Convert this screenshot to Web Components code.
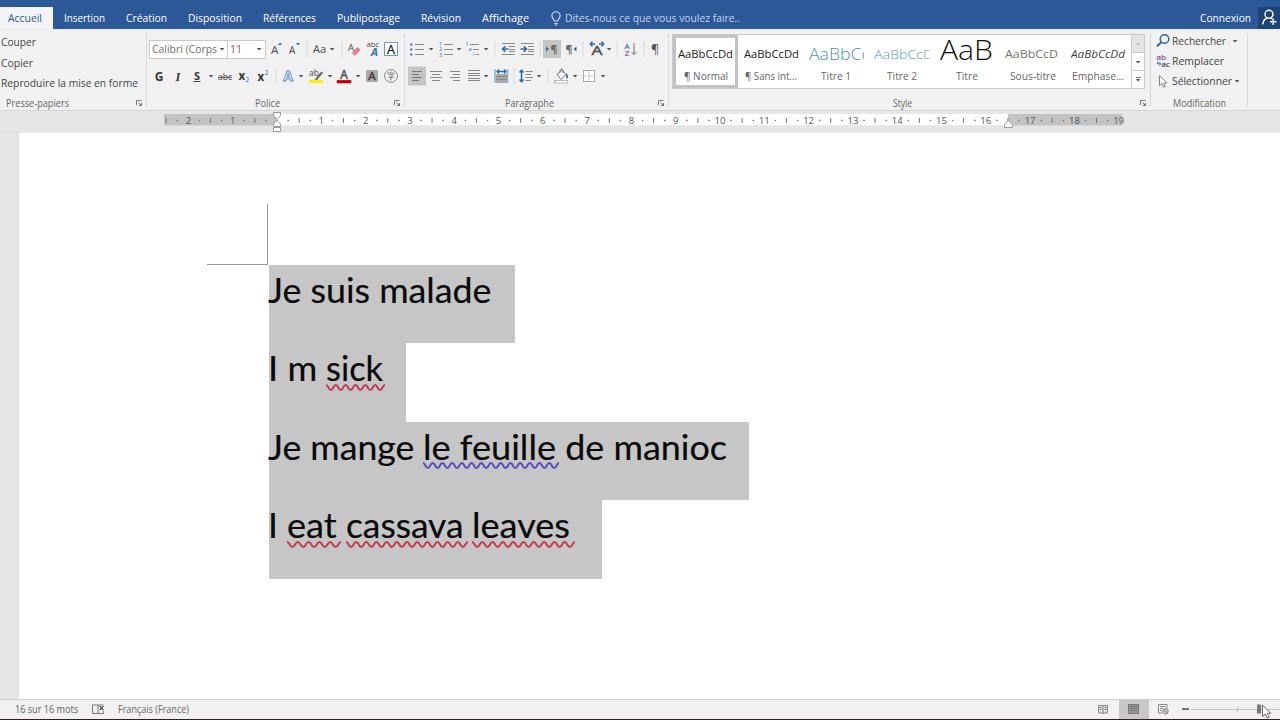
<!DOCTYPE html>
<html lang="fr">
<head>
<meta charset="utf-8">
<title>Word</title>
<style>
    html, body { margin: 0; height: 100%; }
    body {
        width: 1280px;
        height: 720px;
        overflow: hidden;
        display: flex;
        flex-direction: column;
        background: #fff;
        color: #444;
        font: 11px/14px "Open Sans", "Noto Sans", sans-serif;
    }
</style>
</head>
<body>
<word-tabs></word-tabs>
<word-ribbon></word-ribbon>
<word-ruler></word-ruler>
<word-page></word-page>
<word-status></word-status>

<script>
// Icons are drawn on a 20x20 grid, centred on 10,10
const lines = (x1, x2, ys, color = '#777') =>
    ys.map(y => `<path d="M${x1} ${y}H${x2}" stroke="${color}"/>`).join('');

const ICONS = {
    caret: '<path d="M7.8 9h4.6l-2.3 2.6z" fill="#555"/>',
    sep: '<path d="M10 2v16" stroke="#d8d8d8"/>',
    grow: '<text x="5" y="15" font-size="11.5">A</text><path d="M12 6l2-2.6L16 6z" fill="#2f6da8"/>',
    shrink: '<text x="5" y="15" font-size="10">A</text><path d="M12 4l2 2.4L16 4z" fill="#2f6da8"/>',
    aa: '<text x="3" y="14" font-size="11">Aa</text>',
    eraser: '<text x="4" y="12" font-size="9.5">A</text><path d="M8 13.5l5.5-5.5 3 3-5.5 5.5z" fill="#e4788f"/><path d="M7.8 13.7l3 3" stroke="#f0a8b6" stroke-width="1.6"/>',
    abcA: '<text x="3.5" y="7.5" font-size="7.5">abc</text><text x="8" y="17" font-size="11" font-weight="700" font-style="italic" fill="#2f6da8">A</text>',
    boxA: '<rect x="3.5" y="3.5" width="13" height="13" fill="#fff" stroke="#6d9cc4"/><text x="10" y="14.5" text-anchor="middle" font-size="12.5" fill="#222" stroke="#222" stroke-width=".3">A</text>',
    bold: '<text x="10" y="14.5" text-anchor="middle" font-size="12" font-weight="700" fill="#333">G</text>',
    italic: '<text x="10" y="14.5" text-anchor="middle" font-size="12.5" font-weight="700" font-style="italic" style="font-family:Liberation Serif,serif" fill="#333">I</text>',
    under: '<text x="10" y="13.5" text-anchor="middle" font-size="11" font-weight="700" fill="#333">S</text><path d="M6.5 15.5h7" stroke="#444"/>',
    strike: '<text x="10" y="14" text-anchor="middle" font-size="8.5" textLength="14" lengthAdjust="spacingAndGlyphs">abc</text><path d="M3 11.3h14" stroke="#555"/>',
    sub: '<text x="4.5" y="14" font-size="11.5" font-weight="700" fill="#333">x</text><text x="11.5" y="16" font-size="6.5" fill="#2f6da8">2</text>',
    sup: '<text x="4.5" y="14.5" font-size="11.5" font-weight="700" fill="#333">x</text><text x="11.7" y="9" font-size="6.5" fill="#2f6da8">2</text>',
    outlineA: '<text x="10" y="15" text-anchor="middle" font-size="14" font-weight="700" fill="#fff" stroke="#5b8fc4" stroke-width=".9">A</text>',
    marker: '<text x="3" y="9.5" font-size="8.5">ab</text><path d="M8.5 14l6.8-8.5 1.7 1.3-6.5 8z" fill="#666"/><path d="M3 15.5h14" stroke="#fff200" stroke-width="3.2"/>',
    fontColor: '<text x="10" y="12.5" text-anchor="middle" font-size="12" stroke="#444" stroke-width=".4">A</text><path d="M2.8 15.7h14.5" stroke="#c00000" stroke-width="3.2"/>',
    shadeA: '<rect x="4" y="4" width="12" height="12" fill="#a9a9a9"/><text x="10" y="14.3" text-anchor="middle" font-size="11.5" fill="#333" stroke="#333" stroke-width=".3">A</text>',
    circled: '<circle cx="10" cy="10" r="6.4" fill="#f7f7f7" stroke="#777" stroke-width=".9"/><path d="M10 5.3v1.2M6.8 8.3V7h6.4v1.3M7.8 8.8h4.3L10 10.5v3.6H8.7M6.8 11.3h6.4" fill="none" stroke="#777" stroke-width=".9"/>',
    bullets: lines(8, 17, [5.5, 10.5, 15.5], '#8a8a8a') + '<path d="M3.3 5.5h2M3.3 10.5h2M3.3 15.5h2" stroke="#2f6da8" stroke-width="2"/>',
    numbers: lines(8, 17, [5.5, 10.5, 15.5], '#8a8a8a') + '<g font-size="5.5" fill="#2f6da8"><text x="3" y="7">1</text><text x="3" y="12.3">2</text><text x="3" y="17.6">3</text></g>',
    multi: '<path d="M8 5.5h9M11 10.5h6M14 15.5h3" stroke="#8a8a8a"/><g font-size="5.5" fill="#2f6da8"><text x="3.5" y="6.5">1</text><text x="6.5" y="12">a</text><text x="11" y="17">i</text></g>',
    outdent: '<path d="M4 4.5h13M11 7.5h6M11 10.5h6M11 12.5h6M4 15.5h13" stroke="#8a8a8a"/><path d="M10.5 10H5M7.3 7.4L4.7 10l2.6 2.6" fill="none" stroke="#2f6da8" stroke-width="1.7"/>',
    indent: '<path d="M4 4.5h13M11 7.5h6M11 10.5h6M11 12.5h6M4 15.5h13" stroke="#8a8a8a"/><path d="M3.5 10H9M6.8 7.4L9.4 10l-2.6 2.6" fill="none" stroke="#2f6da8" stroke-width="1.7"/>',
    ltr: '<rect x="1" y="1" width="18" height="18" fill="#c5c5c5"/><path d="M4 7.5v5l3-2.5z" fill="#2f6da8"/><text x="8.5" y="14" font-size="10.5" font-weight="700" fill="#666">¶</text>',
    rtl: '<text x="4.5" y="14" font-size="10.5" font-weight="700" fill="#666">¶</text><path d="M15.5 7.5v5l-3-2.5z" fill="#2f6da8"/>',
    scaleA: '<path d="M3 5h5M12 5h5M5.5 2.5L3.2 5l2.3 2.5M14.5 2.5l2.3 2.5-2.3 2.5" fill="none" stroke="#2f6da8" stroke-width="1.4"/><text x="10" y="16" text-anchor="middle" font-size="13" textLength="11" lengthAdjust="spacingAndGlyphs" stroke="#4a4a4a" stroke-width=".4">A</text>',
    sort: '<text x="3.5" y="9.5" font-size="8" fill="#2f6da8" stroke="#2f6da8" stroke-width=".2">A</text><text x="3.7" y="16.8" font-size="8" fill="#80499c" stroke="#80499c" stroke-width=".2">Z</text><path d="M13 4v11.5M10.5 13l2.5 2.7 2.5-2.7" fill="none" stroke="#777"/>',
    pilcrow: '<text x="10" y="14.5" text-anchor="middle" font-size="12.5" fill="#555">¶</text>',
    left: '<rect x="1" y="0.5" width="18" height="19" fill="#c5c5c5"/><path d="M5 5.5h10M5 8.5h7M5 11.5h10M5 14.5h7" stroke="#777"/>',
    center: '<path d="M4 5.5h12M6 8.5h8M4 11.5h12M6 14.5h8" stroke="#888"/>',
    right: '<path d="M5 5.5h10M8 8.5h7M5 11.5h10M8 14.5h7" stroke="#888"/>',
    justify: lines(4, 16, [4.5, 7.5, 9.5, 12.5, 14.5], '#888'),
    spread: '<path d="M4 3v14M16.5 3v14" stroke="#8db4d9" stroke-width="1.6"/><rect x="5" y="8" width="11" height="9" fill="#aaa"/><path d="M5 10.5h11M5 13.5h11" stroke="#888"/><path d="M5.5 5.5h10M8 3.5L6 5.5l2 2M13 3.5l2 2-2 2" fill="none" stroke="#2f6da8" stroke-width="1.3"/>',
    spacing: '<path d="M5.5 4v12M3.5 6.5l2-2.3 2 2.3M3.5 13.5l2 2.3 2-2.3" fill="none" stroke="#2f6da8" stroke-width="1.5"/><path d="M9.5 5.5H17M9.5 8.5H15M9.5 11.5H17M9.5 14.5H15" stroke="#888"/>',
    bucket: '<path d="M6 8.5l5-4.5 4 4.5-5 5z" fill="#fafafa" stroke="#777"/><path d="M9 7V4.5a1.5 1.5 0 0 1 3 0V7" fill="none" stroke="#777"/><path d="M15 7q3 2.5 1.5 6-2-1-1.5-6z" fill="#2f6da8"/><rect x="3.5" y="14.5" width="13" height="2.5" fill="#fff" stroke="#aaa" stroke-width=".8"/>',
    borders: '<rect x="4.5" y="4.5" width="11" height="11" fill="#fff" stroke="#aaa"/><path d="M10 5v10M5 10h10" stroke="#ccc"/>',
    find: '<circle cx="11.5" cy="8" r="4.3" fill="none" stroke="#35659b" stroke-width="1.5"/><path d="M8.3 11.2L4 15.3" stroke="#35659b" stroke-width="2"/>',
    replace: '<text x="3.5" y="9" font-size="8" fill="#80499c" stroke="#80499c" stroke-width=".2">ab</text><text x="8.5" y="15.8" font-size="8" stroke="#4a4a4a" stroke-width=".2">ac</text><path d="M4.5 10.5v2.3h3.2M6.2 11l1.8 1.8-1.8 1.8" fill="none" stroke="#2f6da8"/>',
    pointer: '<path d="M6.5 4.5v10.3l2.6-2.3 1.6 3.8 1.6-.7-1.6-3.6h3.2z" fill="#fff" stroke="#777" stroke-width=".9"/>',
    launcher: '<path d="M7.5 12V7.5h5" fill="none" stroke="#777"/><path d="M9.5 9.5l2.5 2.5" stroke="#777"/><path d="M13 9.5V13H9.5z" fill="#777"/>',
    bulb: '<path d="M8.3 13c0-2-2.4-2.5-2.4-5.2a4.1 4.1 0 0 1 8.2 0c0 2.7-2.4 3.2-2.4 5.2zM8.3 15.5h3.4M8.8 17h2.4" fill="none" stroke="#d5e2f2" stroke-width="1.1"/>',
    user: '<circle cx="9" cy="6.3" r="4" fill="none" stroke="#fff" stroke-width="1.4"/><path d="M2.8 16.5c.3-3.7 2-5.8 4.6-6.5M10.5 10.1c.8.2 1.4.6 1.9 1M13.2 10.5v6.5M10 13.8h6.5" fill="none" stroke="#fff" stroke-width="1.4"/>',
    proof: '<path d="M10 6v9M10 6H4.5v8.5H10M10 6h5.5M15.5 12v2.5H10" fill="none" stroke="#777"/><path d="M11.8 7.2l3.6 4M15.4 7.2l-3.6 4" stroke="#444" stroke-width="1.2"/>',
    read: '<path d="M5.5 5.5h4l.5.7.5-.7h4V13h-4l-.5.8-.5-.8h-4z" fill="#ddd" stroke="#888"/><path d="M10 6v8M6.5 7.5h2M6.5 9.5h2M11.5 7.5h2M11.5 9.5h2" stroke="#888"/>',
    print: '<rect x="4.5" y="4.5" width="10" height="9" fill="#999" stroke="#777"/><path d="M6 6.5h7M6 8.5h7M6 10.5h7" stroke="#777"/>',
    web: '<path d="M14 8V4.5H5.5V13H9" fill="none" stroke="#888"/><path d="M7 6.5h5.5M7 8.5h3M7 10.5h2" stroke="#888"/><circle cx="12.5" cy="11.3" r="2.7" fill="#ddd" stroke="#777"/><path d="M11 10l3 2.6" stroke="#666"/>'
};

const attach = (el, html) => {
    el.attachShadow({ mode: 'open' }).innerHTML = html;
};

const icons = list => list.split(' ').map(item => {
    const [name, w] = item.split(':');
    return `<tool-icon name="${name}" w="${w}"></tool-icon>`;
}).join('');

class ToolIcon extends HTMLElement {
    connectedCallback() {
        attach(this, `
            <style>
                :host { display: flex; justify-content: center; align-items: center; flex: none; width: ${this.getAttribute('w') || 20}px; height: 20px; }
                svg { flex: none; width: 20px; height: 20px; overflow: visible; }
                text { font-family: "Open Sans", sans-serif; }
            </style>
            <svg viewBox="0 0 20 20" fill="#4a4a4a">${ICONS[this.getAttribute('name')]}</svg>
        `);
    }
}

// Text squeezed or stretched to an exact width
class FitText extends HTMLElement {
    connectedCallback() {
        const w = Number(this.getAttribute('w'));
        attach(this, `
            <style>
                :host { display: flex; flex: none; width: ${w}px; }
                span { flex: none; white-space: pre; transform-origin: 0 50%; }
            </style>
            <span><slot></slot></span>
        `);
        const span = this.shadowRoot.querySelector('span');
        span.style.transform = `scaleX(${w / span.getBoundingClientRect().width})`;
    }
}

class WordTabs extends HTMLElement {
    connectedCallback() {
        const tabs = [['Insertion', 41], ['Création', 41], ['Disposition', 54], ['Références', 53], ['Publipostage', 63], ['Révision', 40], ['Affichage', 47]];
        attach(this, `
            <style>
                :host { display: flex; align-items: flex-end; flex: none; height: 29px; background: #2d5897; color: #fff; }
                nav, .tell, .right { display: flex; height: 22px; align-items: center; }
                .tab { display: flex; align-items: center; height: 22px; padding: 0 10.5px; }
                .tab.active { background: #f3f4f5; color: #2b579a; padding: 0 11px 0 8px; }
                .tell { margin-left: 7px; color: #c3d5ec; }
                .right { margin-left: auto; gap: 7px; }
                .user { width: 22px; height: 22px; background: #1e4377; display: flex; align-items: center; }
            </style>
            <nav>
                <div class="tab active"><fit-text w="34">Accueil</fit-text></div>
                ${tabs.map(([t, w]) => `<div class="tab"><fit-text w="${w}">${t}</fit-text></div>`).join('')}
            </nav>
            <div class="tell">
                <tool-icon name="bulb" w="19"></tool-icon>
                <fit-text w="175">Dites-nous ce que vous voulez faire..</fit-text>
            </div>
            <div class="right">
                <fit-text w="51">Connexion</fit-text>
                <div class="user"><tool-icon name="user" w="24"></tool-icon></div>
            </div>
        `);
    }
}

class RibbonGroup extends HTMLElement {
    connectedCallback() {
        const a = n => this.getAttribute(n);
        attach(this, `
            <style>
                :host { display: flex; flex-direction: column; flex: none; box-sizing: border-box; width: ${a('w')}px; height: 80px; position: relative; }
                :host::after { content: ""; position: absolute; right: 0; top: 3px; bottom: 3px; width: 1px; background: #d9d9d9; }
                .body { flex: none; height: 66px; box-sizing: border-box; padding-top: 1px; }
                footer { display: flex; align-items: center; height: 13px; color: #666; }
                .label { padding-left: ${a('offset')}px; }
                tool-icon { margin-left: auto; margin-right: -1px; }
            </style>
            <div class="body"><slot></slot></div>
            <footer>
                <div class="label"><fit-text w="${a('lw')}">${a('label')}</fit-text></div>
                ${this.hasAttribute('launcher') ? '<tool-icon name="launcher" w="18"></tool-icon>' : ''}
            </footer>
        `);
    }
}

class FontPicker extends HTMLElement {
    connectedCallback() {
        attach(this, `
            <style>
                :host { display: flex; flex: none; width: 117px; height: 19px; }
                div { display: flex; align-items: center; box-sizing: border-box; background: #fff; border: 1px solid #c9c9c9; height: 19px; }
                .name { width: 79px; padding-left: 2px; color: #75706a; }
                .size { width: 38px; padding-left: 2px; border-left: 0; color: #8a5560; justify-content: space-between; }
            </style>
            <div class="name"><fit-text w="65">Calibri (Corps</fit-text><tool-icon name="caret" w="10"></tool-icon></div>
            <div class="size"><fit-text w="12">11</fit-text><tool-icon name="caret" w="12"></tool-icon></div>
        `);
    }
}

class StyleGallery extends HTMLElement {
    connectedCallback() {
        // sample, sample width, sample css, label, label width
        const styles = [
            ['AaBbCcDd', 55, 'color:#222', '¶ Normal', 44],
            ['AaBbCcDd', 55, 'color:#222', '¶ Sans int...', 52],
            ['AaBbCc', 61, 'color:#4f94b5;font-size:16px;font-weight:300', 'Titre 1', 30],
            ['AaBbCcD', 59, 'color:#5598b8;font-size:13.5px;font-weight:300', 'Titre 2', 30],
            ['AaB', 53, 'color:#111;font-size:27px;font-weight:300', 'Titre', 22],
            ['AaBbCcD', 53, 'color:#77766a', 'Sous-titre', 46],
            ['AaBbCcDd', 54, 'color:#444;font-style:italic', 'Emphase...', 52]
        ];
        attach(this, `
            <style>
                :host { display: flex; box-sizing: border-box; width: 473px; height: 55px; margin: 3px 0 0 3px; background: #fff; border: 1px solid #cacaca; }
                .cell { width: 65.4px; height: 53px; box-sizing: border-box; flex: none; display: flex; flex-direction: column; align-items: center; padding-top: 4px; }
                .cell.on { outline: 3px solid #c3c3c3; outline-offset: -3px; }
                .sample { width: 55px; height: 30px; overflow: hidden; display: flex; align-items: center; font-size: 11.5px; }
                .cell.big .sample { align-items: flex-start; line-height: 22px; }
                .label { color: #666; }
                .scroll { margin-left: auto; width: 13px; display: flex; flex-direction: column; border-left: 1px solid #cacaca; }
                .scroll div { flex: 1; display: flex; align-items: center; justify-content: center; overflow: hidden; }
                .scroll div + div { border-top: 1px solid #cacaca; }
                .scroll .off { background: #e4e4e4; }
                .off tool-icon { transform: scaleY(-1); opacity: .3; }
                .more { position: relative; }
                .more::before { content: ""; position: absolute; top: 6px; left: 4px; width: 5px; height: 1px; background: #777; }
            </style>
            ${styles.map(([s, sw, css, l, lw], i) => `
                <div class="cell ${i === 0 ? 'on' : ''} ${i === 4 ? 'big' : ''}">
                    <div class="sample" style="${css}"><fit-text w="${sw}">${s}</fit-text></div>
                    <div class="label"><fit-text w="${lw}">${l}</fit-text></div>
                </div>`).join('')}
            <div class="scroll">
                <div class="off"><tool-icon name="caret" w="12"></tool-icon></div>
                <div><tool-icon name="caret" w="12"></tool-icon></div>
                <div class="more"><tool-icon name="caret" w="12"></tool-icon></div>
            </div>
        `);
    }
}

class WordRibbon extends HTMLElement {
    connectedCallback() {
        attach(this, `
            <style>
                :host { display: flex; flex: none; box-sizing: border-box; height: 82px; background: #f1f1f1; border-top: 1px solid #e3ebf5; border-bottom: 1px solid #d5d5d5; }
                .row { display: flex; align-items: center; height: 20px; margin-top: 8px; padding-left: 2px; }
                .row + .row { margin-top: 7px; }
                .clip { display: flex; flex-direction: column; gap: 6.5px; padding: 4px 0 0 0.5px; }
                .edit { display: flex; flex-direction: column; padding-left: 2px; }
                .edit div { display: flex; align-items: center; height: 19.9px; }
            </style>
            <ribbon-group w="147" label="Presse-papiers" lw="63" offset="6" launcher>
                <div class="clip">
                    <fit-text w="35">Couper</fit-text>
                    <fit-text w="32">Copier</fit-text>
                    <fit-text w="137">Reproduire la mise en forme</fit-text>
                </div>
            </ribbon-group>
            <ribbon-group w="258" label="Police" lw="25" offset="108" launcher>
                <div class="row"><font-picker></font-picker>${icons('grow:20 shrink:16 sep:10 aa:15 caret:10 sep:9 eraser:16 abcA:21 boxA:16')}</div>
                <div class="row">${icons('bold:19 italic:19 under:19 caret:9 strike:20 sub:18 sup:19 sep:7 outlineA:18 caret:8 marker:21 caret:7 fontColor:22 caret:6 shadeA:21 circled:18')}</div>
            </ribbon-group>
            <ribbon-group w="264" label="Paragraphe" lw="49" offset="100" launcher>
                <div class="row">${icons('bullets:20 caret:8 numbers:21 caret:6 multi:20 caret:8 sep:9 outdent:17 indent:22 sep:3 ltr:22 rtl:16 sep:8 scaleA:19 caret:5 sep:12 sort:16 sep:9 pilcrow:14')}</div>
                <div class="row">${icons('left:20 center:18 right:20 justify:18 caret:6 spread:24 sep:2 spacing:22 caret:4 sep:14 bucket:12 caret:15 borders:14 caret:14')}</div>
            </ribbon-group>
            <ribbon-group w="482" label="Style" lw="19" offset="224" launcher>
                <style-gallery></style-gallery>
            </ribbon-group>
            <ribbon-group w="97" label="Modification" lw="53" offset="22">
                <div class="edit">
                    <div><tool-icon name="find" w="19"></tool-icon><fit-text w="54">Rechercher</fit-text><tool-icon name="caret" w="18"></tool-icon></div>
                    <div><tool-icon name="replace" w="19"></tool-icon><fit-text w="52">Remplacer</fit-text></div>
                    <div><tool-icon name="pointer" w="19"></tool-icon><fit-text w="60">Sélectionner</fit-text><tool-icon name="caret" w="10"></tool-icon></div>
                </div>
            </ribbon-group>
        `);
    }
}

class WordRuler extends HTMLElement {
    connectedCallback() {
        const zero = 277, cm = 44.3;
        let marks = '';
        for (let q = -10; q < 76; q++) {
            const x = zero + q * cm / 4;
            if (q % 4 === 0) continue;
            marks += q % 2 === 0
                ? `<path d="M${x} 7v5" stroke="#777"/>`
                : `<path d="M${x - .6} 9.5h1.4" stroke="#777" stroke-width="1.3"/>`;
        }
        for (let n = -2; n <= 19; n++) {
            if (n !== 0) marks += `<text x="${zero + n * cm}" y="13">${Math.abs(n)}</text>`;
        }
        attach(this, `
            <style>
                :host { display: block; flex: none; height: 21px; background: #e6e6e6; }
                svg { display: block; }
                text { font-size: 9.5px; text-anchor: middle; fill: #555; }
            </style>
            <svg width="1280" height="21">
                <rect x="164" y="3" width="958" height="11.5" fill="#c3c3c3"/>
                <rect x="277" y="3" width="731" height="11.5" fill="#fff"/>
                ${marks}
                <g fill="#fff" stroke="#999">
                    <path d="M273.5 1.5h7v3l-3.5 4-3.5-4z"/>
                    <path d="M273.5 15.5V13l3.5-4 3.5 4v2.5z"/>
                    <path d="M273.5 16.5h7v4h-7z"/>
                    <path d="M1004.5 16.5v-3l4-4 4 4v3z"/>
                </g>
            </svg>
        `);
    }
}

// A run of words, with the wavy mark of the spelling or grammar check under it
class DocRun extends HTMLElement {
    connectedCallback() {
        const w = Number(this.getAttribute('w'));
        const mark = this.getAttribute('mark');
        const mw = Number(this.getAttribute('mw'));
        const waves = Math.round(mw / 10);
        const p = mw / waves / 4;
        const d = 'M0 0' + `c${p} 0 ${p} 5 ${2 * p} 5s${p} -5 ${2 * p} -5`.repeat(waves);
        attach(this, `
            <style>
                :host { display: block; position: relative; flex: none; width: ${w}px; }
                svg { position: absolute; left: 0; top: 36.5px; overflow: visible; }
            </style>
            <fit-text w="${w}"><slot></slot></fit-text>
            ${mark ? `<svg width="${mw}" height="6"><path d="${d}" fill="none" stroke="${mark}" stroke-width="2"/></svg>` : ''}
        `);
    }
}

class WordPage extends HTMLElement {
    connectedCallback() {
        attach(this, `
            <style>
                :host { display: flex; flex: 1; min-height: 0; }
                .gutter { width: 18px; background: #e6e6e6; border-right: 1px solid #dcdcdc; border-top: 1px solid #dcdcdc; }
                .sheet { flex: 1; background: #fff; border-top: 1px solid #e9e9e9; padding: 71px 0 0 188px; }
                .corner { box-sizing: border-box; width: 61px; height: 61px; border-right: 1px solid #999; border-bottom: 1px solid #999; }
                .text { padding-left: 61.5px; font: 34px/40px Lato, sans-serif; color: #0a0a0a; -webkit-text-stroke: .2px #0a0a0a; }
                .line { display: flex; box-sizing: border-box; height: 78.4px; background: #c6c6c6; padding-top: 5px; }
                .line doc-run:first-child { margin-left: -1px; }
            </style>
            <div class="gutter"></div>
            <div class="sheet">
                <div class="corner"></div>
                <div class="text">
                    <div class="line" style="width:246px">
                        <doc-run w="223.5">Je suis malade</doc-run>
                    </div>
                    <div class="line" style="width:137.5px">
                        <doc-run w="58.5">I m </doc-run>
                        <doc-run w="57" mark="#c43a50" mw="59">sick</doc-run>
                    </div>
                    <div class="line" style="width:480.5px">
                        <doc-run w="155.5">Je mange </doc-run>
                        <doc-run w="133" mark="#5a4bc0" mw="136">le feuille</doc-run>
                        <doc-run w="171">&nbsp;de manioc</doc-run>
                    </div>
                    <div class="line" style="width:333.5px">
                        <doc-run w="19">I </doc-run>
                        <doc-run w="59" mark="#c43a50" mw="54">eat </doc-run>
                        <doc-run w="126.5" mark="#c43a50" mw="122">cassava </doc-run>
                        <doc-run w="98" mark="#c43a50" mw="103">leaves</doc-run>
                    </div>
                </div>
            </div>
        `);
    }
}

class WordStatus extends HTMLElement {
    connectedCallback() {
        attach(this, `
            <style>
                :host { display: flex; align-items: center; flex: none; box-sizing: border-box; height: 21px; background: #f1f1f1; border-top: 1px solid #d0d0d0; border-bottom: 1px solid #2a1f24; color: #666; font-size: 10px; }
                .info { display: flex; align-items: center; padding: 0 0 2px 15px; }
                .view { display: flex; align-items: center; margin-left: auto; }
                .on { width: 30px; height: 19px; display: flex; align-items: center; justify-content: center; background: #c8c8c8; }
                .zoom { width: 104px; height: 19px; }
            </style>
            <div class="info">
                <fit-text w="63">16 sur 16 mots</fit-text>
                <tool-icon name="proof" w="40"></tool-icon>
                <fit-text w="71">Français (France)</fit-text>
            </div>
            <div class="view">
                <tool-icon name="read" w="32"></tool-icon>
                <div class="on"><tool-icon name="print" w="20"></tool-icon></div>
                <tool-icon name="web" w="27"></tool-icon>
                <svg class="zoom" viewBox="0 0 104 19">
                    <path d="M6 9h7" stroke="#555" stroke-width="1.6"/>
                    <path d="M15 9.5h89M61.5 7v5" stroke="#c3c3c3"/>
                    <path d="M81 4.5h4v9h-4z" fill="#777"/>
                    <path d="M86.5 5v11.5l2.8-2.5 1.8 4 2-.9-1.8-3.8h3.4z" fill="#fff" stroke="#555" stroke-width=".9"/>
                </svg>
            </div>
        `);
    }
}

customElements.define('word-tabs', WordTabs);
customElements.define('word-ribbon', WordRibbon);
customElements.define('word-ruler', WordRuler);
customElements.define('word-page', WordPage);
customElements.define('word-status', WordStatus);
customElements.define('ribbon-group', RibbonGroup);
customElements.define('font-picker', FontPicker);
customElements.define('style-gallery', StyleGallery);
customElements.define('doc-run', DocRun);
customElements.define('tool-icon', ToolIcon);
// fit-text measures itself, so it comes once every parent's styles are in place
customElements.define('fit-text', FitText);
</script>
</body>
</html>
